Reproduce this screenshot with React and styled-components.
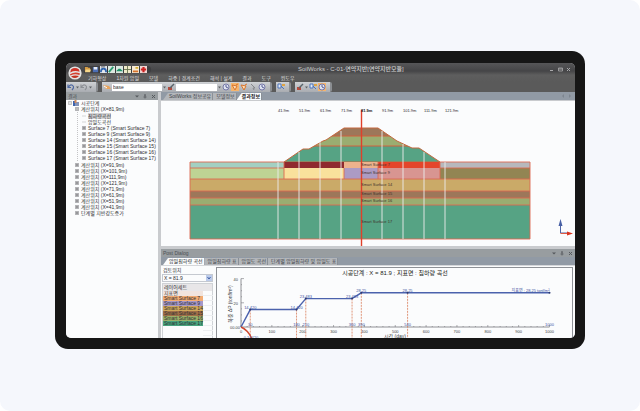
import React from 'react'
import styled, { createGlobalStyle } from 'styled-components'

const GlobalStyle = createGlobalStyle`
  * {
    box-sizing: border-box;
  }
  body {
    margin: 0;
    background: #fff;
    font-family: "Liberation Sans", "Noto Sans CJK KR", sans-serif;
    font-size: 5px;
    line-height: 6px;
    color: #2f2f33;
  }
  ul {
    list-style: none;
    margin: 0;
    padding: 0;
  }
  button, input, select {
    font: inherit;
    color: inherit;
    border: none;
    margin: 0;
    padding: 0;
    background: none;
    border-radius: 0;
  }
  svg {
    display: block;
  }
`

const Page = styled.main`
  min-height: 100vh;
  padding: 51px 55px;
  border-radius: 10px;
  background: #f5f7fc;
`

const Tablet = styled.div`
  padding: 12px 10px 11px 11px;
  border-radius: 13px;
  background: #161616;
`

const Screen = styled.div`
  display: flex;
  flex-direction: column;
  border-radius: 5px;
  overflow: hidden;
  background: #c9cbce;
`

const Ribbon = styled.header`
  display: flex;
  background: linear-gradient(#565658, #454547 8px, #5e5e5e 12px, #5a5a5a);
  color: #dedede;
`

const AppButton = styled.button`
  width: 18px;
  padding: 2px;
  flex: none;
`

const RibbonRows = styled.div`
  flex: 1;
  min-width: 0;
`

const TitleRow = styled.div`
  display: grid;
  grid-template-columns: 5fr auto 4fr;
  align-items: center;
  height: 12px;
`

const QuickAccess = styled.div`
  display: flex;
  gap: 1px;
  align-items: center;
  justify-self: start;
  padding-right: 4px;
  border-radius: 0 6px 6px 0;
  background: #3e3e40;
`

const IconButton = styled.button`
  width: ${p => p.$size || 8}px;
  height: ${p => p.$size || 8}px;
  flex: none;
  background: ${p => (p.$active ? '#f5b46c' : 'transparent')};
`

const Title = styled.h1`
  margin: 0;
  font-size: 6px;
  line-height: 8px;
  font-weight: 500;
  color: #cfcfcf;
`

const WindowButtons = styled.div`
  justify-self: end;
  padding-right: 4px;
`

const Menu = styled.nav`
  display: flex;
  gap: 10px;
  padding-left: 4px;
  height: 7px;
`

const MenuButton = styled.button`
  height: 6px;
  line-height: 6px;
  white-space: nowrap;
`

const Toolbars = styled.div`
  display: flex;
  gap: 4px;
  height: 10px;
  background: #5a5a5a;
`

const Toolbar = styled.div`
  display: flex;
  align-items: center;
  gap: 1px;
  padding: 0 4px 0 1px;
  border-right: 2px solid #8b8e92;
  border-radius: 0 2px 2px 0;
  background: linear-gradient(#cfd1d4, #a9acb1);
`

const ToolbarInput = styled.input`
  width: ${p => p.$width}px;
  height: 7px;
  padding: 0 1px;
  background: #fff;
`

const Workspace = styled.div`
  display: flex;
  gap: 3px;
`

const Sidebar = styled.aside`
  width: 92px;
  flex: none;
  background: #fbfcfd;
`

const PanelHeader = styled.div`
  display: flex;
  justify-content: space-between;
  align-items: center;
  height: 8px;
  padding: 0 2px;
  background: #989da0;
  color: #4c5054;
`

const TreeList = styled.ul`
  padding: ${p => (p.$nested ? '1px 0 1px 7px' : '0 0 0 9px')};
  ${p => p.$nested && 'background: repeating-linear-gradient(#c4c4c6 0 1px, transparent 1px 2px) 2px 0 / 1px 100% no-repeat;'}
`

const TreeRow = styled.div`
  display: flex;
  align-items: center;
  gap: 2px;
  height: 6px;
  white-space: nowrap;
  span {
    background: ${p => (p.$selected ? '#d3d3d5' : 'transparent')};
  }
`

const Main = styled.div`
  flex: 1;
  min-width: 0;
`

const TabBar = styled.div`
  display: flex;
  align-items: flex-end;
  height: 8px;
  padding: 0 4px 0 2px;
  background: #919aa5;
`

const Tab = styled.button`
  height: 7px;
  padding: 0 1px 0 ${p => (p.$first ? 6 : p.$bold ? 5 : 3)}px;
  line-height: 7px;
  white-space: nowrap;
  color: ${p => (p.$active ? '#1a1a1c' : '#414449')};
  font-weight: ${p => (p.$bold ? 700 : 400)};
  background: ${p => (p.$active ? '#fbfcfd' : '#b3b6ba')};
  border-right: 1px solid #8b9097;
  clip-path: ${p => (p.$first || p.$active ? 'polygon(5px 0, 100% 0, 100% 100%, 0 100%)' : 'none')};
`

const TabArrows = styled.div`
  display: flex;
  margin-left: auto;
  padding-bottom: 2px;
`

const SectionView = styled.div`
  padding-right: 2px;
  border-top: 1px solid #c9cbce;
  background: #fbfcfd;
  svg {
    width: 100%;
  }
`

const PostDialog = styled.section`
  margin-top: 3px;
  background: #fbfcfd;
`

const PostBody = styled.div`
  display: flex;
  gap: 3px;
  height: 73px;
  padding: 0 2px 0 1px;
  overflow: hidden;
  border-top: 1px solid #d5d7da;
`

const PostForm = styled.div`
  width: 51px;
  flex: none;
  padding-top: 1px;
  label {
    display: block;
    height: 7px;
    line-height: 7px;
    padding-left: 1px;
  }
`

const SelectBox = styled.div`
  position: relative;
  border: 1px solid #c5c9d0;
  select {
    display: block;
    width: 100%;
    height: 6px;
    padding-left: 1px;
    appearance: none;
  }
  svg {
    position: absolute;
    right: 0;
    top: 0;
    pointer-events: none;
  }
`

const LayerTable = styled.table`
  width: 100%;
  margin-top: 1px;
  border-collapse: collapse;
  border: 1px solid #cfd2d6;
  table-layout: fixed;
  td, th {
    height: 5px;
    padding: 0 0 0 1px;
    line-height: 5px;
    font-weight: 400;
    text-align: left;
    white-space: nowrap;
  }
  th {
    height: 7px;
    background: #e8e6e8;
  }
  td + td {
    border-bottom: 1px solid #eceef0;
  }
`

const LayerCell = styled.td`
  background: ${p => p.$color};
`

const ChartBox = styled.div`
  flex: 1;
  min-width: 0;
  margin-top: 1px;
  border: 1px solid #8e9196;
  border-width: 1px 1px 0;
  svg {
    width: 100%;
    overflow: hidden;
  }
`

const menus = ['기하형상', '1차원 압밀', '모델', '하중 | 경계조건', '해석 | 설계', '결과', '도구', '윈도우']

const surfaces = [7, 9, 14, 15, 16, 17]
const locations = ['91,9m', '101,9m', '111,9m', '121,9m', '71,9m', '61,9m', '51,9m', '41,9m']

const layers = [
  { name: '지표면', color: '#f1e4de' },
  { name: 'Smart Surface 7', color: '#f2ab72' },
  { name: 'Smart Surface 9', color: '#a698c8' },
  { name: 'Smart Surface 14', color: '#d0a75b' },
  { name: 'Smart Surface 15', color: '#a06f48' },
  { name: 'Smart Surface 16', color: '#9bb069' },
  { name: 'Smart Surface 17', color: '#48a37e' },
  { name: '', color: '#fbfcfd' },
  { name: '', color: '#fbfcfd' },
  { name: '', color: '#fbfcfd' },
]

function WindowIcons({ color, kind = 'pin' }) {
  return (
    <svg width="21" height="5" viewBox="0 0 21 5" stroke={color} fill="none">
      {kind === 'pin' ? <path d="M0 1.5h4l-2 2z" fill={color} stroke="none" /> : <path d="M0 3.5h3" />}
      {kind === 'pin' ? <path d="M10 0.5v4M8.500 3h3M9 1h2" strokeWidth=".8" /> : <path d="M8.500 1h4v3h-4zM8.500 2h4" strokeWidth=".8" />}
      <path d="M17 1l3 3M20 1l-3 3" />
    </svg>
  )
}

function Logo() {
  return (
    <svg width="14" height="14" viewBox="0 0 14 14">
      <circle cx="7" cy="7" r="6.600" fill="#e4e2e2" />
      <path d="M3 3.500Q7 .6 11 3.500L11.500 5.800Q7 4 2.200 6.400Z" fill="#cf3328" />
      <path d="M2 8.200q5-3 10-.8l-.6 1.600Q7 7.400 2.400 9.400z" fill="#d6402f" />
      <path d="M3 10.400q4-1.800 8-.3Q7.500 13.800 3 10.400" fill="#c2301f" />
    </svg>
  )
}

const quickIcons = [
  { label: 'Open', art: <><path d="M1 1h3l1 1h2v4H1z" fill="#d69d45" /><path d="M2 4h6L7 7H1z" fill="#f6d68a" /></> },
  { label: 'Save', art: <><path d="M1 1h6v6H1z" fill="#4d6fb5" /><path d="M2 1h4v3H2z" fill="#e5ebf5" /></> },
  { label: 'Curve', art: <><path d="M0 0h8v8H0z" fill="#e4e8ee" /><path d="M1 7q0-4 3-4t3 4" stroke="#3266ae" strokeWidth="2" fill="none" /><path d="M1 1h5" stroke="#4e4e50" /></> },
  { label: 'Slope', art: <><path d="M0 0h8v8H0z" fill="#dce9e2" /><path d="M1 7L6 1" stroke="#2c9b70" strokeWidth="2" /></> },
  { label: 'Bank', art: <><path d="M0 0h8v8H0z" fill="#dce9e2" /><path d="M0 6l3-3h2l3 3z" fill="#22946a" /></> },
  { label: 'Grid', art: <><path d="M0 0h8v8H0z" fill="#eee9c9" /><path d="M4 0v8M0 4h8" stroke="#64714c" /></> },
  { label: 'Layer', art: <><path d="M0 0h8v8H0z" fill="#f4e9d5" /><path d="M1 5h6v2H1z" fill="#d9742b" /><path d="M4 1h3v2H4z" fill="#d8b02f" /></> },
  { label: 'Add', art: <><path d="M0 0h8v8H0z" fill="#eed5d2" /><path d="M4 1v6M1 4h6" stroke="#cc2020" strokeWidth="2.500" /></> },
]

const undoArt = color => <path d="M1.500 4Q4 0 6.500 3.500Q7 5 5 7M1 1.500v3h3" stroke={color} strokeWidth="1.200" fill="none" />
const penArt = <><path d="M1 4h4v3H1z" fill="#b34b3d" /><path d="M3 5l4-4" stroke="#59656b" strokeWidth="1.500" /></>
const layerArt = <><path d="M0 2l3 4h5L6 3z" fill="#e8a45d" /><path d="M1 3l3 2" stroke="#fff" /></>
const clockArt = <><circle cx="4" cy="4" r="3" fill="#dfe4f1" stroke="#7779a9" /><path d="M4 2v2l2 1" stroke="#575b94" fill="none" /></>
const moveArt = <path d="M1 2l5 1-2 4zM5 2l2-1" stroke="#d9752d" fill="#f9dcb8" />
const cursorArt = <path d="M2 1l4 4-2 0 1 2" stroke="#85878b" fill="none" />
const blueArt = <><path d="M1 1h3v4H1zM4 3l3 3" stroke="#4c74ba" fill="#e3eaf6" /><path d="M5 1h3v2H5z" fill="#dfa444" /></>

function Tool({ label, art, active, size }) {
  return (
    <IconButton aria-label={label} $active={active} $size={size}>
      <svg width="100%" height="100%" viewBox="0 0 8 8">{art}</svg>
    </IconButton>
  )
}

function Drop() {
  return (
    <svg width="3" height="3" viewBox="0 0 3 3">
      <path d="M0 .5h3L1.500 2.500z" fill="#606368" />
    </svg>
  )
}

function TreeItem({ label, open, leaf, selected, children }) {
  return (
    <li>
      <TreeRow $selected={selected}>
        <svg width="4" height="4" viewBox="0 0 4 4">
          {leaf
            ? <path d="M0 2h4" stroke="#bcbcc0" strokeWidth=".6" />
            : <><path d="M.4.4h3.200v3.200H.4z" fill="#f4f4f4" stroke="#8b8b8f" strokeWidth=".7" /><path d={open ? 'M1 2h2' : 'M1 2h2M2 1v2'} stroke="#55555a" strokeWidth=".7" /></>}
        </svg>
        <span>{label}</span>
      </TreeRow>
      {children}
    </li>
  )
}

function ResultTree() {
  return (
    <>
      <TreeRow>
        <svg width="13" height="6" viewBox="0 0 13 6">
          <path d="M2.500 1.500h3v3h-3zM3 3h2" fill="#fff" stroke="#999" strokeWidth=".6" />
          <path d="M7 1h2v5H7z" fill="#3c62ad" />
          <path d="M9 2h4v4H9z" fill="#8493b8" />
          <path d="M8.500 0h2v3h-2z" fill="#d38a59" />
        </svg>
        <span>시공단계</span>
      </TreeRow>
      <TreeList>
        <TreeItem label="계산위치 (X=81,9m)" open>
          <TreeList $nested>
            <TreeItem label="침하량곡선" leaf selected />
            <TreeItem label="압밀도곡선" leaf />
            {surfaces.map(n => <TreeItem key={n} label={`Surface ${n} (Smart Surface ${n})`} />)}
          </TreeList>
        </TreeItem>
        {locations.map(x => <TreeItem key={x} label={`계산위치 (X=${x})`} />)}
        <TreeItem label="단계별 지반강도증가" />
      </TreeList>
    </>
  )
}

const blocks = [
  [29, 61, 94, 6, '#a3d0c2'],
  [123, 61, 60, 6, '#8f2a2e'],
  [183, 61, 34, 6, '#edb28c'],
  [217, 61, 62, 6, '#e4452b'],
  [279, 61, 90, 6, '#b7b8bc'],
  [29, 67, 94, 11, '#bed394'],
  [123, 67, 60, 11, '#f9e19c'],
  [183, 67, 34, 11, '#ac9bc4'],
  [217, 67, 62, 11, '#d89591'],
  [279, 67, 90, 11, '#928553'],
  [29, 78, 340, 12, '#caaa68'],
  [29, 90, 340, 7, '#9d775a'],
  [29, 97, 340, 7, '#9aad71'],
  [29, 104, 340, 34, '#56a384'],
]

const stations = [
  [117, 61, '41.9m'],
  [138, 51, '51.9m'],
  [159, 41, '61.9m'],
  [180, 30, '71.9m'],
  [221, 30, '91.9m'],
  [242, 43, '101.9m'],
  [263, 51, '111.9m'],
  [284, 61, '121.9m'],
]

const bank = '123,61 142,48 148,48 162,40 165,39 183,27 217,27 236,40 251,47 258,47 279,61'

function SoilSection() {
  return (
    <svg viewBox="0 0 412 145" fontSize="4" role="img" aria-label="Soil section">
      <clipPath id="bank"><polygon points={bank} /></clipPath>
      <g clipPath="url(#bank)">
        <rect x="120" y="25" width="162" height="10" fill="#9d775a" />
        <rect x="120" y="35" width="162" height="10" fill="#9aad71" />
        <rect x="120" y="45" width="162" height="16" fill="#56a384" />
        <path d="M120 35h162M120 45h162" stroke="#d0603f" />
      </g>
      <polygon points={bank} fill="none" stroke="#c4683f" />
      {blocks.map(([x, y, w, h, color]) => (
        <rect key={`${x}-${y}`} x={x} y={y} width={w} height={h} fill={color} />
      ))}
      <path d="M29 61h94M279 61h90M29 67h94M279 67h90M29 78h340M29 90h340M29 97h340M29 104h340M29 138h340M29 61v77M369 61v77M123 61v17M183 67v11M217 61v17M279 61v17" stroke="#db6a50" strokeWidth=".9" fill="none" />
      {stations.map(([x, y, label]) => (
        <g key={label}>
          <path d={`M${x} ${y}V138`} stroke="#ececec" strokeOpacity=".9" />
          <text x={x} y="11" fill="#2c2c30">{label}</text>
        </g>
      ))}
      <path d="M200.500 9V145" stroke="#e0402a" strokeWidth="1.400" />
      <text x="200" y="11" fontWeight="700" fill="#111">81.9m</text>
      {[65, 73, 85, 94, 101, 122].map((y, i) => (
        <text key={y} x="200" y={y} fill="#3f302b">Smart Surface {surfaces[i]}</text>
      ))}
      <path d="M399.500 121v11h8" stroke="#4f65a5" fill="none" />
      <path d="M399.500 118l2 7h-4z" fill="#4860a5" />
      <path d="M399.500 132.500h8" stroke="#dd5a45" />
      <path d="M406 130.500l6 2-6 2z" fill="#d83420" />
    </svg>
  )
}

// origin of the plot area and pixels per unit
const X0 = 24
const Y0 = 59
const px = v => X0 + v * 0.3085
const py = v => Y0 - v * 1.21

const points = [
  [30, 14.42, '14.420'],
  [180, 14.42, '14.420'],
  [210, 23.483, '23.483'],
  [360, 23.483, '23.483'],
  [390, 28.25, '28.25'],
  [540, 28.25, '28.25'],
]

function SettlementChart() {
  const line = [[0, 0], ...points, [1000, 28.25]].map(([x, y]) => `${px(x)},${py(y)}`).join(' ')
  const ticks = Array.from({ length: 51 }, (_, i) => i * 20)
  return (
    <svg viewBox="0 0 355 72" fontSize="4" fill="#404045" role="img" aria-label="Settlement chart">
      <text x="178" y="7" fontSize="6" textAnchor="middle" fill="#1c1c20">시공단계 : X = 81.9 ; 지표면 : 침하량 곡선</text>
      <text x="-36" y="15" fontSize="5" textAnchor="middle" transform="rotate(-90)">하중 ΔP (tonf/m²)</text>
      <path d={`M${X0} ${py(40)}V${Y0}H${px(1000)}`} stroke="#77777c" strokeWidth=".8" fill="none" />
      {ticks.map(t => (
        <path key={t} d={`M${px(t)} ${Y0}v${t % 100 ? -1 : -2}`} stroke="#77777c" strokeWidth=".6" />
      ))}
      {[5, 10, 15, 20, 25, 30, 35, 40].map(t => (
        <path key={t} d={`M${X0} ${py(t)}h${t % 20 ? 1 : 3}`} stroke="#77777c" strokeWidth=".6" />
      ))}
      <text x="21" y={py(40) + 2} textAnchor="end">40</text>
      <text x="21" y={py(20) + 2} textAnchor="end">20</text>
      <text x="23" y={Y0 + 2} textAnchor="end">00.00</text>
      {Array.from({ length: 11 }, (_, i) => i * 100).map(t => (
        <text key={t} x={px(t)} y={Y0 + 6} textAnchor="middle">{t}</text>
      ))}
      <text x="178" y="70" fontSize="5" textAnchor="middle">시간 (day)</text>
      {points.map(([x, y]) => (
        <path key={x} d={`M${px(x)} ${py(y)}V72`} stroke="#dd8a6b" strokeWidth=".9" strokeDasharray="2 1" />
      ))}
      <polyline points={line} fill="none" stroke="#4b62ad" strokeWidth="1.400" />
      <path d={`M${X0} ${Y0}q7 3 11 12`} stroke="#cf4a32" strokeWidth="1.400" fill="none" />
      <g fill="#3b53a2" textAnchor="middle">
        {points.map(([x, y, label]) => (
          <g key={x}>
            <circle cx={px(x)} cy={py(y)} r="1" fill="#2c3970" />
            <text x={px(x)} y={py(y) - 1}>{label}</text>
            <text x={px(x)} y={Y0 - 1}>{x}</text>
          </g>
        ))}
        <circle cx={px(1000)} cy={py(28.25)} r="1" fill="#2c3970" />
        <text x={px(1000)} y={Y0 - 1}>1000</text>
        <text x={px(1000)} y={py(28.25) - 1} textAnchor="end">지표면 : 28.25 tonf/m²</text>
        <text x="34" y="71">0.14420</text>
      </g>
    </svg>
  )
}

function App() {
  return (
    <>
      <GlobalStyle />
      <Page>
        <Tablet>
          <Screen>
            <Ribbon>
              <AppButton aria-label="SoilWorks"><Logo /></AppButton>
              <RibbonRows>
                <TitleRow>
                  <QuickAccess>
                    {quickIcons.map(icon => <Tool key={icon.label} {...icon} size={7} />)}
                  </QuickAccess>
                  <Title>SoilWorks - C-01-연약지반[연약지반모듈]</Title>
                  <WindowButtons><WindowIcons color="#a9a9ab" kind="window" /></WindowButtons>
                </TitleRow>
                <Menu>
                  {menus.map(m => <MenuButton key={m}>{m}</MenuButton>)}
                </Menu>
              </RibbonRows>
            </Ribbon>
            <Toolbars>
              <Toolbar>
                <Tool label="Undo" art={undoArt('#4c67a0')} />
                <Drop />
                <Tool label="Redo" art={undoArt('#8d9095')} />
                <Drop />
              </Toolbar>
              <Toolbar>
                <Tool label="Layers" art={layerArt} />
                <ToolbarInput $width={50} aria-label="Layer" defaultValue="base" />
                <Drop />
                <Tool label="Edit" art={penArt} />
                <ToolbarInput $width={41} aria-label="Name" />
                <Drop />
                <Tool label="Time" art={clockArt} />
                <Tool label="Select" art={moveArt} active />
                <Tool label="Move" art={moveArt} />
                <Tool label="Pointer" art={cursorArt} />
                <Tool label="History" art={clockArt} />
              </Toolbar>
              <Toolbar>
                <Tool label="View" art={blueArt} />
              </Toolbar>
              <Toolbar>
                <Tool label="Mark" art={penArt} />
                <Drop />
                <Tool label="Paint" art={blueArt} />
                <Tool label="Result" art={clockArt} active />
              </Toolbar>
            </Toolbars>
            <Workspace>
              <Sidebar>
                <PanelHeader>
                  <span>결과</span>
                  <WindowIcons color="#55595d" />
                </PanelHeader>
                <ResultTree />
              </Sidebar>
              <Main>
                <TabBar>
                  <Tab $first>SoilWorks 정보공유</Tab>
                  <Tab>모델정보</Tab>
                  <Tab $active $bold>결과정보</Tab>
                  <TabArrows>
                    <svg width="9" height="4" viewBox="0 0 9 4">
                      <path d="M2 0v4L0 2zM7 0v4l2-2z" fill="#7c858f" />
                    </svg>
                  </TabArrows>
                </TabBar>
                <SectionView><SoilSection /></SectionView>
                <PostDialog>
                  <PanelHeader>
                    <span>Post Dialog</span>
                    <WindowIcons color="#55595d" />
                  </PanelHeader>
                  <TabBar>
                    <Tab $first $active>압밀침하량 곡선</Tab>
                    <Tab>압밀침하량 표</Tab>
                    <Tab>압밀도 곡선</Tab>
                    <Tab>단계별 압밀침하량 및 압밀도 표</Tab>
                  </TabBar>
                  <PostBody>
                    <PostForm>
                      <label htmlFor="position">검토위치</label>
                      <SelectBox>
                        <select id="position" defaultValue="81.9">
                          <option value="81.9">X = 81.9</option>
                        </select>
                        <svg width="6" height="6" viewBox="0 0 6 6">
                          <path d="M0 0h6v6H0z" fill="#bccbea" />
                          <path d="M1.500 2L3 4l1.500-2" stroke="#3f5fa5" fill="none" />
                        </svg>
                      </SelectBox>
                      <LayerTable>
                        <colgroup><col width="80%" /><col /></colgroup>
                        <thead>
                          <tr><th>레이어세트</th><th /></tr>
                        </thead>
                        <tbody>
                          {layers.map((l, i) => (
                            <tr key={i}><LayerCell $color={l.color}>{l.name}</LayerCell><td /></tr>
                          ))}
                        </tbody>
                      </LayerTable>
                    </PostForm>
                    <ChartBox><SettlementChart /></ChartBox>
                  </PostBody>
                </PostDialog>
              </Main>
            </Workspace>
          </Screen>
        </Tablet>
      </Page>
    </>
  )
}

export default App
